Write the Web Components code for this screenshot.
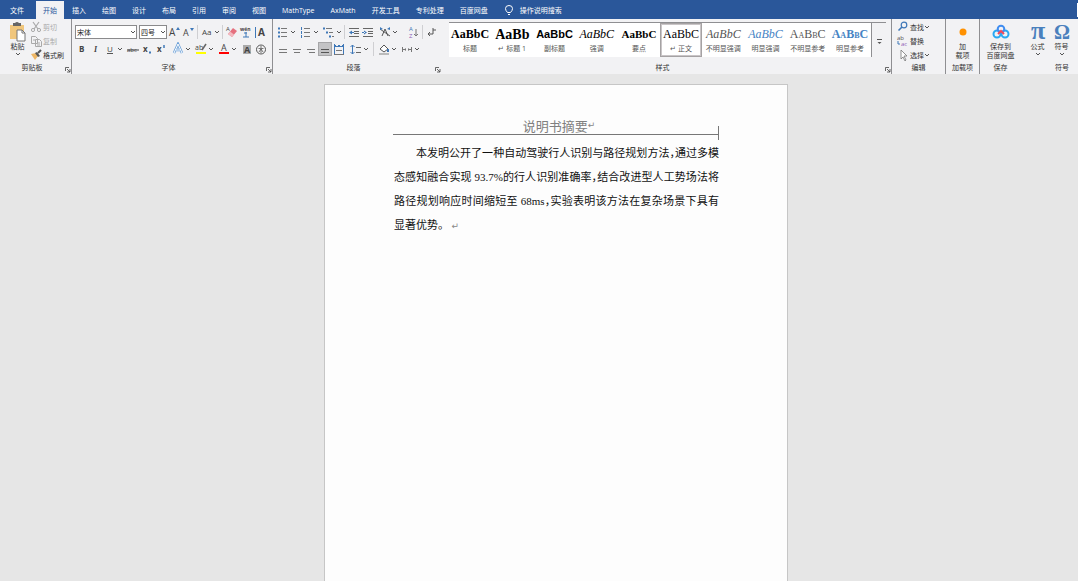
<!DOCTYPE html>
<html lang="zh-CN">
<head>
<meta charset="utf-8">
<title>说明书摘要</title>
<style>
  html, body { height: 100%; }
  body {
    margin: 0;
    overflow: hidden;
    background: #e6e6e6;
    color: #333;
    font: 7px/9px "Open Sans", "Noto Sans CJK SC", sans-serif;
  }
</style>
</head>
<body>
<word-app></word-app>

<script>
const ICONS = {
  paste: '<path d="M1 3h14v14H1z" fill="#f0c67c"/><path d="M4 3V1h2q2-2 4 0h2v3H4z" fill="#666"/><path d="M8 8h5l3 3v8H8z" fill="#fff" stroke="#777"/><path d="M13 8v3h3" fill="none" stroke="#777"/>',
  cut: '<path d="M4 2l5 7M10 2L5 9" stroke="#aaa" fill="none" stroke-width="1.2"/><circle cx="4" cy="10" r="1.6" fill="none" stroke="#aaa"/><circle cx="10" cy="10" r="1.6" fill="none" stroke="#aaa"/>',
  copy: '<path d="M2.500 2.500h4l2 2v5h-6zM6.500 5.500h4l2 2v5h-6z" fill="#f2f2f4" stroke="#aaa"/><path d="M4 6h2M8 9h3M8 11h3" stroke="#aaa"/>',
  brush: '<path d="M2 6l5-1 2 3-3 4z" fill="#eeb766"/><path d="M6 5l3 4 2-1-3-4z" fill="#555"/><path d="M9 5l3-3" stroke="#555" stroke-width="2"/>',
  grow: '<text x="2" y="11" font-size="10">A</text><path d="M9 5l2-3 2 3z" fill="#3f78b8"/>',
  shrink: '<text x="2" y="11" font-size="9">A</text><path d="M9 3h4l-2 3z" fill="#3f78b8"/>',
  aa: '<text x="2" y="10" font-size="8">Aa</text>',
  eraser: '<path d="M3 9l5-6 4 3-5 6z" fill="#e5707e"/><path d="M3 9l2-2.500 4 3L7 12z" fill="#f3b9c0"/><text x="1" y="6" font-size="6">A</text>',
  pinyin: '<text x="1" y="6" font-size="5" font-weight="700">wén</text><path d="M4 12h6M7 7v5M5 8h3" stroke="#3f78b8" fill="none"/>',
  border: '<path d="M2.500 2v11" stroke="#3f78b8"/><text x="5" y="11" font-size="10" font-weight="700">A</text>',
  bold: '<text x="4" y="10" font-size="8" font-weight="700">B</text>',
  italic: '<text x="5" y="10" font-size="8" font-weight="700" font-style="italic" font-family="Liberation Serif">I</text>',
  underline: '<text x="4" y="10" font-size="8">U</text><path d="M4 11.500h6" stroke="#555"/>',
  strike: '<text x="1" y="10" font-size="6">abc</text><path d="M1 8h12" stroke="#444"/>',
  sub: '<text x="3" y="10" font-size="8" font-weight="700">x</text><path d="M9 10.500h2" stroke="#3f78b8" stroke-width="2"/>',
  sup: '<text x="3" y="10" font-size="8" font-weight="700">x</text><path d="M10 3v3" stroke="#3f78b8" stroke-width="1.500"/>',
  effect: '<path d="M3 11L7 2l4 9M5 8h4" fill="none" stroke="#6ba0d8" stroke-width="2.500"/><path d="M3 11L7 2l4 9M5 8h4" fill="none" stroke="#fff"/>',
  highlight: '<text x="1" y="8" font-size="7">ab</text><path d="M8 8l4-6" stroke="#666" stroke-width="1.500"/><path d="M2 10h10v2H2z" fill="#ff0"/>',
  fontcolor: '<text x="4" y="9" font-size="9">A</text><path d="M2 10h10v2H2z" fill="#f00"/>',
  shade: '<path d="M3 3h8v9H3z" fill="#aaa"/><text x="4" y="11" font-size="9" font-weight="700">A</text>',
  enclose: '<circle cx="7" cy="7.500" r="4.500" fill="none" stroke="#555"/><path d="M4.500 6.500h5M7 4v2M7 7v4M5 10l2-3 2 3" stroke="#555" fill="none" stroke-width=".8"/>',
  bullets: '<path d="M2 2.500h2v2H2zM2 6.500h2v2H2zM2 10.500h2v2H2z" fill="#3f78b8"/><path d="M5 3.500h6M5 7.500h6M5 11.500h6" stroke="#777"/>',
  numbers: '<path d="M2.500 2v3M2.500 6v3M2.500 10v3" stroke="#3f78b8"/><path d="M5 3.500h6M5 7.500h6M5 11.500h6" stroke="#777"/>',
  levels: '<path d="M1 3.500h2M4 7.500h2M7 11.500h2" stroke="#3f78b8" stroke-width="2"/><path d="M4 3.500h6M7 7.500h4M10 11.500h2" stroke="#777"/>',
  outdent: '<path d="M2 3.500h10M7 6.500h5M7 8.500h5M2 11.500h10" stroke="#666"/><path d="M2 7.500l3-2v4zM4 7h3v1H4z" fill="#3f78b8"/>',
  indent: '<path d="M2 3.500h10M7 6.500h5M7 8.500h5M2 11.500h10" stroke="#666"/><path d="M6 7.500l-3-2v4zM1 7h3v1H1z" fill="#3f78b8"/>',
  asian: '<path d="M4 11l3-7 3 7M2 4l10 7" fill="none" stroke="#555"/><path d="M2 2v3l3-1zM12 2v3L9 4z" fill="#3f78b8"/>',
  sort: '<text x="3" y="6" font-size="6" fill="#3f78b8">A</text><text x="3" y="13" font-size="6" fill="#8c5bb5">Z</text><path d="M10 4v7M8 9l2 2 2-2" stroke="#777" fill="none"/>',
  mark: '<path d="M8 3v6H3M5 7L3 9l2 2M8 5h3" fill="none" stroke="#555"/>',
  left: '<path d="M3 7.500h8M3 10.500h8" stroke="#777"/>',
  center: '<path d="M3 7.500h8M4 10.500h6" stroke="#777"/>',
  right: '<path d="M3 7.500h8M5 10.500h6" stroke="#777"/>',
  justify: '<path d="M3 7.500h8M3 10.500h8" stroke="#555"/>',
  distribute: '<path d="M2.500 2v10M11.500 2v10M3 4.500h8" stroke="#3f78b8"/><path d="M2 3.500h10" stroke="#3f78b8" stroke-dasharray="2 2"/><path d="M4 8.500h6M2 12.500h10" stroke="#777"/>',
  spacing: '<path d="M3.500 3v9M1.500 5l2-2 2 2M1.500 10l2 2 2-2" fill="none" stroke="#3f78b8"/><path d="M7 5.500h5M7 10.500h5" stroke="#666"/>',
  fill: '<path d="M3 7l4-4 4 4-4 3z" fill="#fff" stroke="#555"/><path d="M11 7v3" stroke="#3f78b8" stroke-width="2"/><path d="M2 11h10v2H2z" fill="#bbb"/>',
  grid: '<path d="M2.500 5v5M11.500 5v5M3 7.500h3M8 7.500h3" stroke="#777"/><path d="M6 6L4 7.500 6 9zM8 6l2 1.500L8 9z" fill="#777"/>',
  find: '<circle cx="8" cy="5" r="2.800" fill="none" stroke="#3f78b8" stroke-width="1.200"/><path d="M6 7L2.500 10.500" stroke="#3f78b8" stroke-width="1.600"/>',
  replace: '<text x="1" y="6" font-size="6" fill="#555">ab</text><text x="5" y="12" font-size="6" fill="#8c5bb5">ac</text><path d="M2 7v3h2" stroke="#3f78b8" fill="none"/>',
  select: '<path d="M5 2v9l2-2 2 4 1-1-2-4h3z" fill="#fff" stroke="#777" stroke-width=".8"/>',
  dot: '<circle cx="10" cy="10" r="3.500" fill="#ff9100"/>',
  cloud: '<circle cx="6" cy="12" r="3.500" fill="none" stroke="#2aa8f2" stroke-width="2"/><circle cx="14" cy="12" r="3.500" fill="none" stroke="#2aa8f2" stroke-width="2"/><circle cx="10" cy="7" r="3.300" fill="none" stroke="#3f8cf0" stroke-width="2"/><path d="M7 12l3-3 3 3" fill="none" stroke="#f04a5d" stroke-width="2"/>',
  pi: '<text x="10" y="17" text-anchor="middle" font-family="Liberation Serif" font-size="26" font-weight="700" fill="#4a80bd">π</text>',
  omega: '<text x="10" y="17" text-anchor="middle" font-family="Liberation Serif" font-size="20" font-weight="700" fill="#4a80bd">Ω</text>',
  bulb: '<path d="M5.500 9.500q-2-2-2-4 0-3 3.500-3t3.500 3q0 2-2 4zM6 11.500h2" fill="none" stroke="#fff"/>',
  chevron: '<path d="M1 2l2 2 2-2" fill="none" stroke="#555"/>',
  more: '<path d="M1 1.500h5" stroke="#555"/><path d="M1.500 4h4l-2 2z" fill="#555"/>',
  launcher: '<path d="M1.500 5V1.500H5M3 3l3 3M6 3v3H3" fill="none" stroke="#444" stroke-width=".8"/>'
};

// [width, height] for icons that are not 14x14
const SIZES = {
  paste: [17, 20], dot: [20, 20], cloud: [20, 20], pi: [20, 20], omega: [20, 20],
  chevron: [6, 6], more: [7, 7], launcher: [7, 7]
};

class RbIcon extends HTMLElement {
  constructor() {
    super();
    this.attachShadow({ mode: 'open' });
    const name = this.getAttribute('name');
    const [w, h] = SIZES[name] || [14, 14];
    this.shadowRoot.innerHTML = `
      <style>
        :host { display: inline-flex; flex: none; }
        svg { display: block; fill: #444; }
      </style>
      <svg width="${w}" height="${h}" viewBox="0 0 ${w} ${h}" aria-hidden="true">${ICONS[name] || ''}</svg>
    `;
  }
}

// small icon button, optionally with a drop arrow
class RbTool extends HTMLElement {
  constructor() {
    super();
    this.attachShadow({ mode: 'open' });
    const arrow = this.hasAttribute('arrow') ? '<rb-icon name="chevron"></rb-icon>' : '';
    this.shadowRoot.innerHTML = `
      <style>
        :host { display: block; flex: none; }
        button {
          display: flex;
          align-items: center;
          height: 14px;
          padding: 0;
          border: 0;
          background: none;
          color: inherit;
          font: inherit;
        }
        :host([pressed]) button { background: #c3c3c5; outline: 1px solid #a6a6a8; outline-offset: -1px; }
        :host([disabled]) { color: #aaa; }
      </style>
      <button type="button" aria-label="${this.getAttribute('label') || this.textContent}">
        <rb-icon name="${this.getAttribute('icon')}"></rb-icon><slot></slot>${arrow}
      </button>
    `;
  }
}

// tall button: big picture, caption below
class RbBig extends HTMLElement {
  constructor() {
    super();
    this.attachShadow({ mode: 'open' });
    const arrow = this.hasAttribute('arrow') ? '<rb-icon name="chevron"></rb-icon>' : '';
    this.shadowRoot.innerHTML = `
      <style>
        :host { display: block; flex: none; }
        button {
          display: flex;
          flex-direction: column;
          align-items: center;
          padding: 0;
          border: 0;
          background: none;
          color: inherit;
          font: inherit;
          text-align: center;
        }
      </style>
      <button type="button">
        <rb-icon name="${this.getAttribute('icon')}"></rb-icon>
        <span><slot></slot></span>${arrow}
      </button>
    `;
  }
}

class RbSep extends HTMLElement {
  constructor() {
    super();
    this.attachShadow({ mode: 'open' });
    this.shadowRoot.innerHTML = `
      <style>
        :host { display: flex; justify-content: center; flex: none; width: 3px; height: 14px; }
        :host([line]) { width: 5px; }
        :host([wide]) { width: 8px; }
        i { display: none; width: 1px; background: #cfcfd2; }
        :host([line]) i { display: block; }
      </style>
      <i></i>
    `;
  }
}

class RbSelect extends HTMLElement {
  constructor() {
    super();
    this.attachShadow({ mode: 'open' });
    this.shadowRoot.innerHTML = `
      <style>
        :host { display: flex; align-items: center; flex: none; box-sizing: border-box; height: 14px; border: 1px solid #8a8a8c; background: #fff; }
        select {
          flex: 1;
          min-width: 0;
          appearance: none;
          border: 0;
          padding: 0 0 0 1px;
          background: none;
          color: #222;
          font: inherit;
        }
      </style>
      <select aria-label="${this.getAttribute('label')}"><option>${this.getAttribute('value')}</option></select>
      <rb-icon name="chevron"></rb-icon>
    `;
  }
}

class RbGroup extends HTMLElement {
  constructor() {
    super();
    this.attachShadow({ mode: 'open' });
    const launcher = this.hasAttribute('launcher') ? '<button type="button" aria-label="更多选项"><rb-icon name="launcher"></rb-icon></button>' : '';
    this.shadowRoot.innerHTML = `
      <style>
        :host { display: flex; flex-direction: column; min-width: 0; padding: 1px 0; box-sizing: border-box; }
        :host([divider]) { border-right: 1px solid #8f8f92; }
        .content { flex: 1; min-height: 0; }
        footer {
          display: flex;
          align-items: center;
          flex: none;
          height: 11px;
          color: #333;
          text-align: center;
        }
        footer span { flex: 1; white-space: nowrap; }
        :host([end]) footer span { text-align: right; padding-right: 9px; }
        button { flex: none; align-self: flex-end; padding: 0; border: 0; background: none; line-height: 0; }
      </style>
      <div class="content"><slot></slot></div>
      <footer><span>${this.getAttribute('label')}</span>${launcher}</footer>
    `;
  }
}

class StyleCard extends HTMLElement {
  constructor() {
    super();
    this.attachShadow({ mode: 'open' });
    this.shadowRoot.innerHTML = `
      <style>
        :host { display: block; flex: 1; min-width: 0; }
        button {
          display: flex;
          flex-direction: column;
          align-items: center;
          justify-content: space-between;
          box-sizing: border-box;
          width: 100%;
          height: 34px;
          padding: 2px 0;
          border: 2px solid transparent;
          background: none;
          color: #555;
        }
        :host([selected]) button { border-color: #c9c5c7; outline: 1px solid #a5a2a3; outline-offset: -1px; }
        .sample {
          white-space: nowrap;
          font-family: "Liberation Serif", serif;
          font-size: 12px;
          line-height: 15px;
          color: #000;
        }
        .bold { font-weight: 700; }
        .large { font-size: 14px; }
        .sans { font-family: "Liberation Sans", sans-serif; font-size: 11px; }
        .small { font-size: 11px; }
        .italic { font-style: italic; }
        .grey { color: #555; }
        .blue { color: #4583c4; }
        .caps { font-variant-caps: small-caps; }
        .name { font: 7px/9px "Open Sans", "Noto Sans CJK SC", sans-serif; white-space: nowrap; }
      </style>
      <button type="button">
        <span class="sample ${this.getAttribute('look') || ''}">${this.getAttribute('sample') || 'AaBbC'}</span>
        <span class="name"><slot></slot></span>
      </button>
    `;
  }
}

class RibbonTabs extends HTMLElement {
  constructor() {
    super();
    this.attachShadow({ mode: 'open' });
    const tabs = ['文件', '开始', '插入', '绘图', '设计', '布局', '引用', '审阅', '视图', 'MathType', 'AxMath', '开发工具', '专利处理', '百度网盘'];
    this.shadowRoot.innerHTML = `
      <style>
        :host { display: flex; align-items: stretch; height: 19px; padding-left: 2px; box-sizing: border-box; background: #2a579a; color: #fff; }
        nav { display: flex; padding-top: 1px; }
        button {
          padding: 0 8px;
          border: 0;
          background: none;
          color: inherit;
          font: inherit;
          white-space: nowrap;
        }
        button:first-child { margin-right: 4px; }
        button[aria-selected="true"] { padding: 0 7px; background: #f2f2f4; color: #2a579a; }
        .tell { display: flex; align-items: center; gap: 4px; padding: 1px 8px 0 6px; }
        .share { width: 1px; margin: 3px 0 2px auto; background: #fff; }
      </style>
      <nav role="tablist">
        ${tabs.map(t => `<button type="button" role="tab" aria-selected="${t === '开始'}">${t}</button>`).join('')}
      </nav>
      <button type="button" class="tell"><rb-icon name="bulb"></rb-icon>操作说明搜索</button>
      <div class="share"></div>
    `;
  }
}

class WordRibbon extends HTMLElement {
  constructor() {
    super();
    this.attachShadow({ mode: 'open' });
    this.shadowRoot.innerHTML = `
      <style>
        :host {
          display: grid;
          grid-template-columns: 72px 201px 168px 1fr 54px 34px 41px 57px;
          height: 55px;
          background: #f2f2f4;
        }
        .row { display: flex; align-items: center; padding-left: 3px; }
        .rows { display: flex; flex-direction: column; gap: 3px; padding-top: 5px; }
        .stack { display: flex; flex-direction: column; }
        .clip { display: flex; gap: 3px; padding-left: 9px; white-space: nowrap; }
        .clip rb-big { padding-top: 2px; }
        .edit { padding-left: 4px; }
        .mid { display: flex; justify-content: center; gap: 4px; padding-top: 2px; white-space: nowrap; }
        .font { width: 62px; margin-right: 2px; }
        .size { width: 28px; }
        .gallery {
          display: flex;
          margin: 2px 5px 0 8px;
          border-top: 1px solid #8f8f92;
        }
        .cards { display: flex; flex: 1; min-width: 0; background: #fff; border-right: 1px solid #8f8f92; }
        .more { width: 14px; padding: 0; border: 0; background: none; }
      </style>

      <rb-group label="剪贴板" divider launcher>
        <div class="clip">
          <rb-big icon="paste" arrow>粘贴</rb-big>
          <div class="stack">
            <rb-tool icon="cut" disabled>剪切</rb-tool>
            <rb-tool icon="copy" disabled>复制</rb-tool>
            <rb-tool icon="brush">格式刷</rb-tool>
          </div>
        </div>
      </rb-group>

      <rb-group label="字体" divider launcher>
        <div class="rows">
          <div class="row">
            <rb-select class="font" label="字体" value="宋体"></rb-select>
            <rb-select class="size" label="字号" value="四号"></rb-select>
            <rb-tool icon="grow" label="增大字号"></rb-tool>
            <rb-tool icon="shrink" label="减小字号"></rb-tool>
            <rb-sep line></rb-sep>
            <rb-tool icon="aa" label="更改大小写" arrow></rb-tool>
            <rb-sep line></rb-sep>
            <rb-tool icon="eraser" label="清除格式"></rb-tool>
            <rb-tool icon="pinyin" label="拼音指南"></rb-tool>
            <rb-tool icon="border" label="字符边框"></rb-tool>
          </div>
          <div class="row">
            <rb-tool icon="bold" label="加粗"></rb-tool>
            <rb-tool icon="italic" label="倾斜"></rb-tool>
            <rb-tool icon="underline" label="下划线" arrow></rb-tool>
            <rb-sep></rb-sep>
            <rb-tool icon="strike" label="删除线"></rb-tool>
            <rb-tool icon="sub" label="下标"></rb-tool>
            <rb-tool icon="sup" label="上标"></rb-tool>
            <rb-sep></rb-sep>
            <rb-tool icon="effect" label="文本效果" arrow></rb-tool>
            <rb-sep></rb-sep>
            <rb-tool icon="highlight" label="突出显示" arrow></rb-tool>
            <rb-sep></rb-sep>
            <rb-tool icon="fontcolor" label="字体颜色" arrow></rb-tool>
            <rb-sep></rb-sep>
            <rb-tool icon="shade" label="字符底纹"></rb-tool>
            <rb-tool icon="enclose" label="带圈字符"></rb-tool>
          </div>
        </div>
      </rb-group>

      <rb-group label="段落" launcher>
        <div class="rows">
          <div class="row">
            <rb-tool icon="bullets" label="项目符号" arrow></rb-tool>
            <rb-sep></rb-sep>
            <rb-tool icon="numbers" label="编号" arrow></rb-tool>
            <rb-sep></rb-sep>
            <rb-tool icon="levels" label="多级列表" arrow></rb-tool>
            <rb-sep line></rb-sep>
            <rb-tool icon="outdent" label="减少缩进量"></rb-tool>
            <rb-tool icon="indent" label="增加缩进量"></rb-tool>
            <rb-sep></rb-sep>
            <rb-tool icon="asian" label="中文版式" arrow></rb-tool>
            <rb-sep wide></rb-sep>
            <rb-tool icon="sort" label="排序"></rb-tool>
            <rb-sep line></rb-sep>
            <rb-tool icon="mark" label="显示编辑标记"></rb-tool>
          </div>
          <div class="row">
            <rb-tool icon="left" label="左对齐"></rb-tool>
            <rb-tool icon="center" label="居中"></rb-tool>
            <rb-tool icon="right" label="右对齐"></rb-tool>
            <rb-tool icon="justify" label="两端对齐" pressed></rb-tool>
            <rb-tool icon="distribute" label="分散对齐"></rb-tool>
            <rb-sep></rb-sep>
            <rb-tool icon="spacing" label="行距" arrow></rb-tool>
            <rb-sep line wide></rb-sep>
            <rb-tool icon="fill" label="底纹" arrow></rb-tool>
            <rb-sep></rb-sep>
            <rb-tool icon="grid" label="边框" arrow></rb-tool>
          </div>
        </div>
      </rb-group>

      <rb-group label="样式" divider launcher>
        <div class="gallery">
          <div class="cards">
            <style-card look="bold">标题</style-card>
            <style-card look="bold large" sample="AaBb">↵ 标题 1</style-card>
            <style-card look="bold sans">副标题</style-card>
            <style-card look="italic">强调</style-card>
            <style-card look="bold small">要点</style-card>
            <style-card selected>↵ 正文</style-card>
            <style-card look="italic grey">不明显强调</style-card>
            <style-card look="italic blue">明显强调</style-card>
            <style-card look="caps grey">不明显参考</style-card>
            <style-card look="caps bold blue">明显参考</style-card>
          </div>
          <button type="button" class="more" aria-label="其他样式"><rb-icon name="more"></rb-icon></button>
        </div>
      </rb-group>

      <rb-group label="编辑" divider>
        <div class="stack edit">
          <rb-tool icon="find" arrow>查找</rb-tool>
          <rb-tool icon="replace">替换</rb-tool>
          <rb-tool icon="select" arrow>选择</rb-tool>
        </div>
      </rb-group>

      <rb-group label="加载项" divider>
        <div class="mid"><rb-big icon="dot">加<br>载项</rb-big></div>
      </rb-group>

      <rb-group label="保存">
        <div class="mid"><rb-big icon="cloud">保存到<br>百度网盘</rb-big></div>
      </rb-group>

      <rb-group label="符号" end>
        <div class="mid">
          <rb-big icon="pi" arrow>公式</rb-big>
          <rb-big icon="omega" arrow>符号</rb-big>
        </div>
      </rb-group>
    `;
  }
}

class WordPage extends HTMLElement {
  constructor() {
    super();
    this.attachShadow({ mode: 'open' });
    this.shadowRoot.innerHTML = `
      <style>
        :host {
          display: block;
          box-sizing: border-box;
          width: 464px;
          max-width: 100%;
          padding: 32px 68px;
          border: 1px solid #c6c6c6;
          border-bottom: 0;
          background: #fdfdfd;
          color: #111;
          font-family: "Liberation Serif", "Noto Sans CJK SC", serif;
        }
        header {
          position: relative;
          display: flex;
          justify-content: center;
          align-items: center;
          height: 17px;
          padding-left: 6px;
          border-bottom: 1px solid #777;
          color: #808080;
          font: 13px/17px "Noto Sans CJK SC", sans-serif;
        }
        /* margin tick at the right end of the header rule */
        header::after {
          content: "";
          position: absolute;
          right: 0;
          bottom: -6px;
          width: 1px;
          height: 14px;
          background: #777;
        }
        .ret { font: 9px/9px "DejaVu Sans", sans-serif; color: #888; }
        ::slotted(p) {
          margin: 6px 0 0 1px;
          font-size: 11px;
          line-height: 24px;
          text-indent: 2em;
          text-align: justify;
          font-feature-settings: "halt";
        }
      </style>
      <header><slot name="header"></slot><span class="ret">↵</span></header>
      <slot></slot>
    `;
  }
}

class WordApp extends HTMLElement {
  constructor() {
    super();
    this.attachShadow({ mode: 'open' });
    this.shadowRoot.innerHTML = `
      <style>
        :host { display: flex; flex-direction: column; height: 100vh; }
        main { flex: 1; display: flex; justify-content: center; padding: 10px 0 0 34px; min-height: 0; }
        .ret { font: 9px/9px "DejaVu Sans", sans-serif; color: #888; margin-left: 8px; }
      </style>
      <ribbon-tabs></ribbon-tabs>
      <word-ribbon></word-ribbon>
      <main>
        <word-page>
          <span slot="header">说明书摘要</span>
          <p>本发明公开了一种自动驾驶行人识别与路径规划方法，通过多模态感知融合实现 93.7%的行人识别准确率，结合改进型人工势场法将路径规划响应时间缩短至 68ms，实验表明该方法在复杂场景下具有显著优势。<span class="ret">↵</span></p>
        </word-page>
      </main>
    `;
  }
}

customElements.define('rb-icon', RbIcon);
customElements.define('rb-tool', RbTool);
customElements.define('rb-big', RbBig);
customElements.define('rb-sep', RbSep);
customElements.define('rb-select', RbSelect);
customElements.define('rb-group', RbGroup);
customElements.define('style-card', StyleCard);
customElements.define('ribbon-tabs', RibbonTabs);
customElements.define('word-ribbon', WordRibbon);
customElements.define('word-page', WordPage);
customElements.define('word-app', WordApp);
</script>
</body>
</html>
